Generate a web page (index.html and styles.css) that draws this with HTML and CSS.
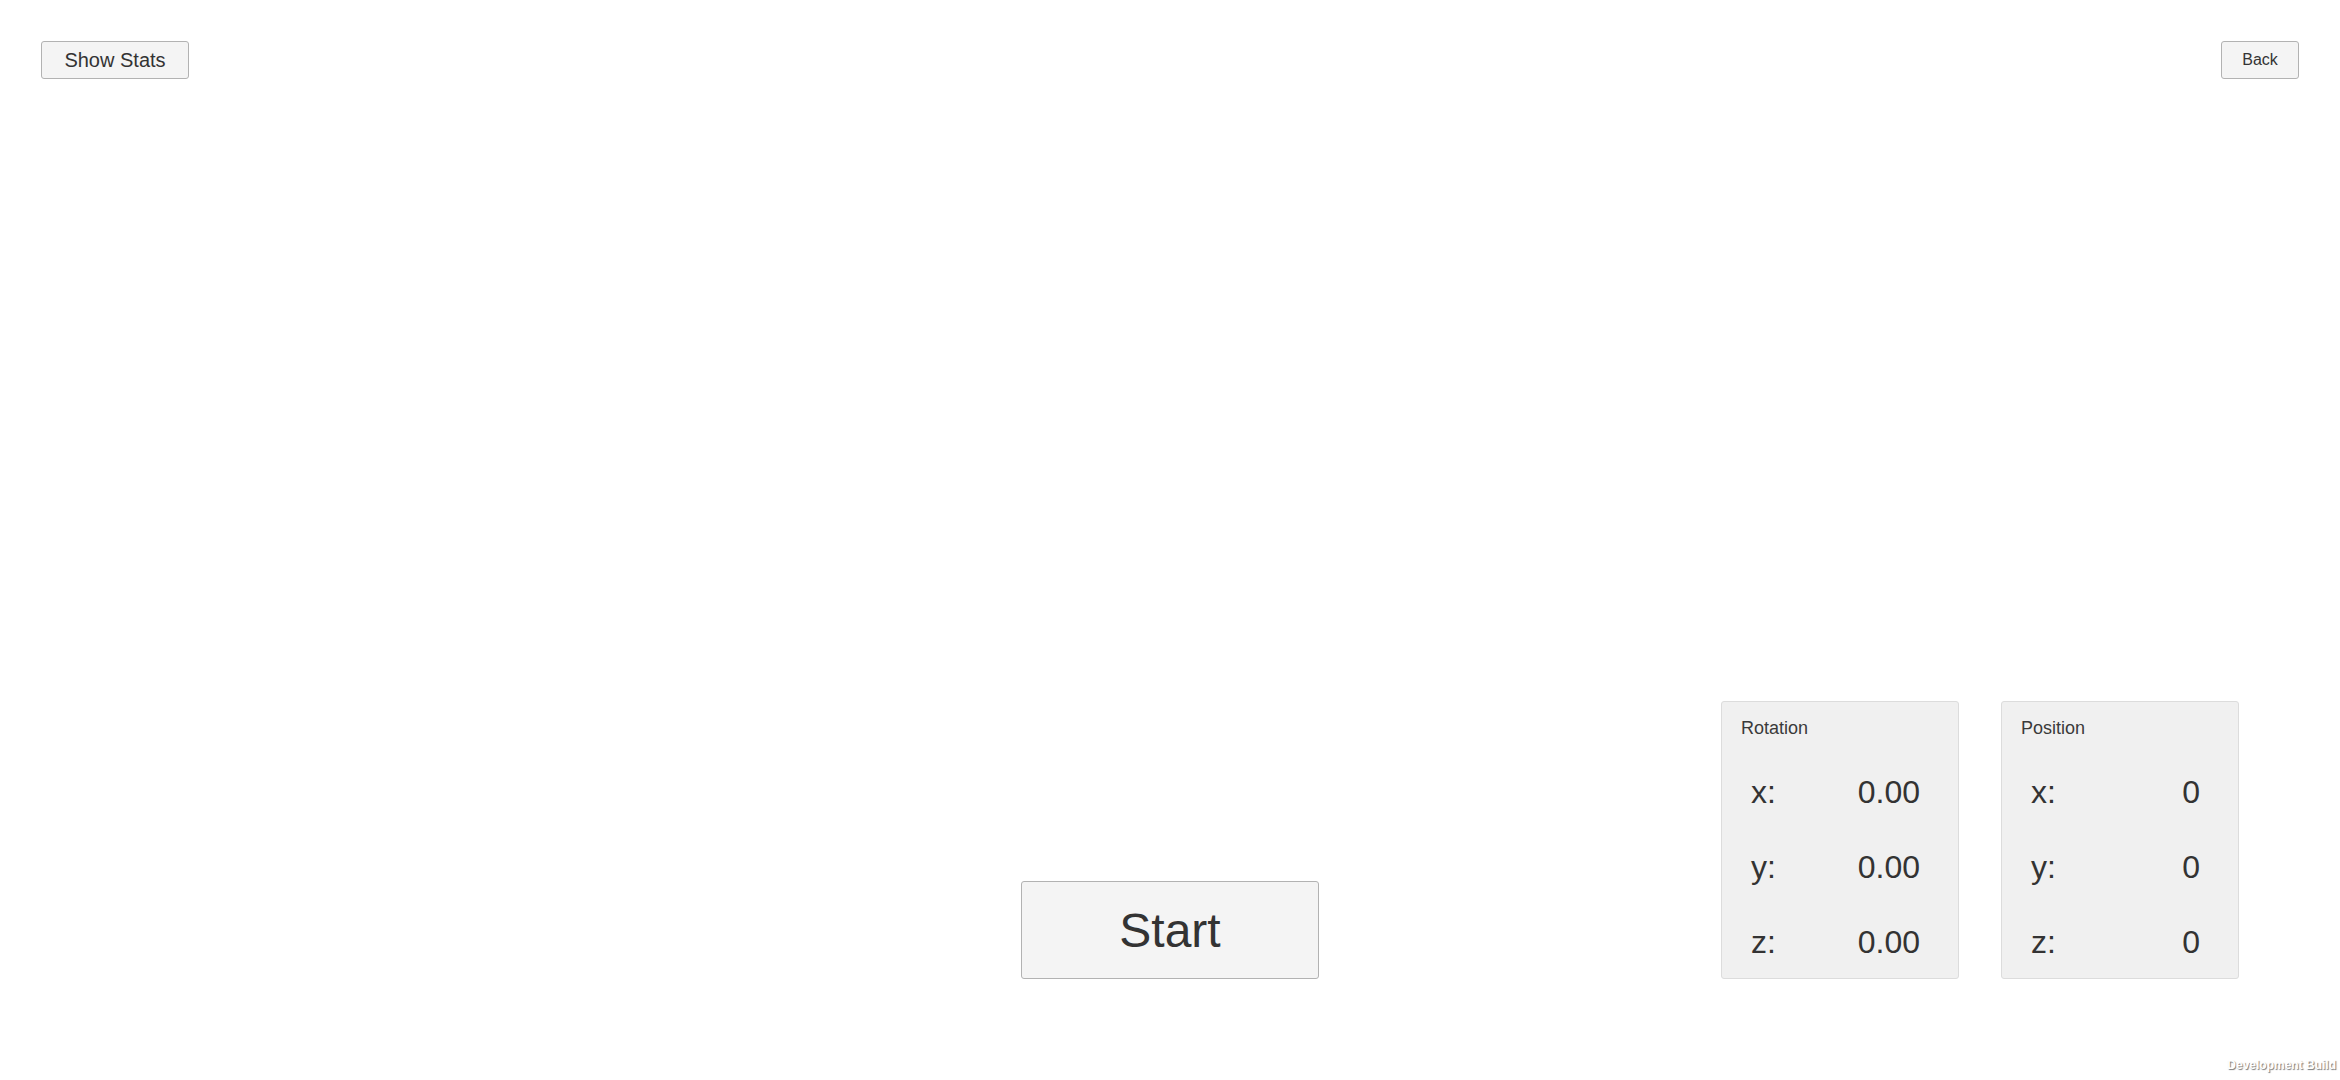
FILE: index.html
```html
<!DOCTYPE html>
<html>
<head>
<meta charset="utf-8">
<link rel="stylesheet" href="styles.css">
</head>
<body>
<div class="screen">
  <div class="top-bar">
    <button class="btn btn-stats">Show Stats</button>
    <button class="btn btn-back">Back</button>
  </div>
  <div class="bottom-bar">
    <div class="side"></div>
    <button class="btn btn-start">Start</button>
    <div class="side panels">
      <div class="panel">
        <div class="panel-title">Rotation</div>
        <div class="row"><span>x:</span><span>0.00</span></div>
        <div class="row"><span>y:</span><span>0.00</span></div>
        <div class="row"><span>z:</span><span>0.00</span></div>
      </div>
      <div class="panel">
        <div class="panel-title">Position</div>
        <div class="row"><span>x:</span><span>0</span></div>
        <div class="row"><span>y:</span><span>0</span></div>
        <div class="row"><span>z:</span><span>0</span></div>
      </div>
    </div>
  </div>
  <div class="dev-build">Development Build</div>
</div>
</body>
</html>
```
FILE: styles.css
```css
html, body {
  margin: 0;
  padding: 0;
  background: #ffffff;
}
body {
  font-family: "Liberation Sans", Arial, sans-serif;
  color: #333333;
}
.screen {
  position: relative;
  width: 2340px;
  height: 1080px;
  display: flex;
  flex-direction: column;
  justify-content: space-between;
  overflow: hidden;
}
.top-bar {
  display: flex;
  justify-content: space-between;
  align-items: flex-start;
  padding: 41px 41px 0 41px;
}
.btn {
  font-family: "Liberation Sans", Arial, sans-serif;
  color: #333333;
  background: #f4f4f4;
  border: 1px solid #b2b2b2;
  border-radius: 3px;
  padding: 0;
  margin: 0;
  box-sizing: border-box;
  display: flex;
  align-items: center;
  justify-content: center;
}
.btn-stats {
  width: 148px;
  height: 38px;
  font-size: 20px;
}
.btn-back {
  width: 78px;
  height: 38px;
  font-size: 16px;
}
.bottom-bar {
  display: grid;
  grid-template-columns: 1fr 298px 1fr;
  align-items: end;
  padding-bottom: 101px;
}
.btn-start {
  width: 298px;
  height: 98px;
  font-size: 48px;
}
.panels {
  display: flex;
  justify-content: flex-end;
  gap: 42px;
  padding-right: 101px;
}
.panel {
  width: 238px;
  height: 278px;
  box-sizing: border-box;
  background: #f0f0f0;
  border: 1px solid #dcdcdc;
  border-radius: 3px;
  padding-top: 16px;
  display: flex;
  flex-direction: column;
}
.panel-title {
  font-size: 18px;
  line-height: 20px;
  padding-left: 19px;
  margin-bottom: 17px;
  color: #3a3a3a;
}
.row {
  display: flex;
  justify-content: space-between;
  font-size: 32px;
  line-height: 75px;
  height: 75px;
  flex: none;
  padding: 0 38px 0 29px;
}
.dev-build {
  position: absolute;
  right: 4px;
  bottom: 8px;
  font-size: 12px;
  font-weight: bold;
  color: #ffffff;
  text-shadow: 1px 1px 1px #7a7a7a;
}
```
